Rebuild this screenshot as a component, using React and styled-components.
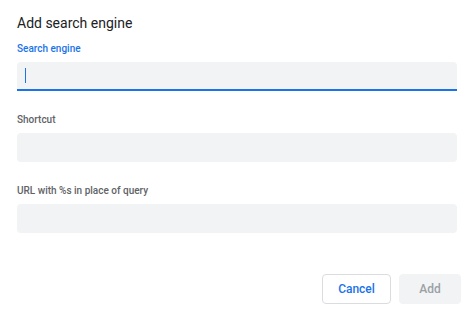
import React from 'react';
import styled, { createGlobalStyle } from 'styled-components';

const Global = createGlobalStyle`
  body {
    margin: 0;
    background: #fff;
    font-family: Roboto, "Noto Sans", sans-serif;
  }
`;

const Dialog = styled.div`
  width: 474px;
  height: 315px;
  box-sizing: border-box;
  padding: 13px 17px 0 17px;
  display: flex;
  flex-direction: column;
`;

const Title = styled.h2`
  margin: 0 0 8px 0;
  font-size: 14px;
  line-height: 20px;
  font-weight: 400;
  color: #202124;
`;

const Field = styled.div`
  display: flex;
  flex-direction: column;
  margin-bottom: 21px;
`;

const Label = styled.label`
  font-size: 10px;
  line-height: 16px;
  font-weight: 500;
  margin-bottom: 5px;
  color: ${p => (p.$focused ? '#1a73e8' : '#5f6368')};
`;

const Input = styled.div`
  position: relative;
  height: 29px;
  box-sizing: border-box;
  background: #f1f3f4;
  border-radius: 4px;
  border-bottom: ${p => (p.$focused ? '2px solid #1a73e8' : 'none')};
  border-bottom-left-radius: ${p => (p.$focused ? '0' : '4px')};
  border-bottom-right-radius: ${p => (p.$focused ? '0' : '4px')};
`;

const Caret = styled.span`
  position: absolute;
  left: 8px;
  top: 6px;
  width: 1px;
  height: 15px;
  background: #1a73e8;
`;

const Actions = styled.div`
  display: flex;
  justify-content: flex-end;
  gap: 8px;
  margin-top: 20px;
  margin-right: -4px;
`;

const Button = styled.button`
  height: 30px;
  box-sizing: border-box;
  padding: 0 15px;
  border-radius: 4px;
  font-family: Roboto, sans-serif;
  font-size: 12px;
  font-weight: 500;
  border: ${p => (p.$disabled ? '1px solid #f1f3f4' : '1px solid #dadce0')};
  background: ${p => (p.$disabled ? '#f1f3f4' : '#fff')};
  color: ${p => (p.$disabled ? '#9aa0a6' : '#1a73e8')};
  min-width: ${p => p.$width}px;
`;

export default function App() {
  return (
    <>
      <Global />
      <Dialog>
        <Title>Add search engine</Title>
        <Field>
          <Label $focused>Search engine</Label>
          <Input $focused>
            <Caret />
          </Input>
        </Field>
        <Field>
          <Label>Shortcut</Label>
          <Input />
        </Field>
        <Field>
          <Label>URL with %s in place of query</Label>
          <Input />
        </Field>
        <Actions>
          <Button $width={69}>Cancel</Button>
          <Button $disabled $width={62}>Add</Button>
        </Actions>
      </Dialog>
    </>
  );
}
